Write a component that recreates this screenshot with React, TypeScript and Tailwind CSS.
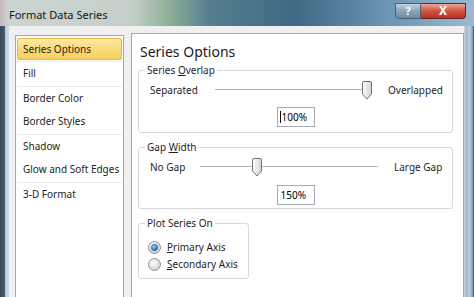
import type { ReactNode } from 'react'

const font = { fontFamily: '"Noto Sans", "Open Sans", Arial, sans-serif' }

function Thumb() {
  return (
    <svg width="10" height="19" viewBox="0 0 10 19">
      <defs>
        <linearGradient id="thumb" x1="0" y1="0" x2="1" y2="0">
          <stop offset="0" stopColor="#ffffff" />
          <stop offset="1" stopColor="#cfd2d6" />
        </linearGradient>
      </defs>
      <path
        d="M2 0.5 H8 Q9.5 0.5 9.5 2 V13 L5 18 L0.5 13 V2 Q0.5 0.5 2 0.5 Z"
        fill="url(#thumb)"
        stroke="#6e7378"
      />
    </svg>
  )
}

function Radio({ checked }: { checked?: boolean }) {
  return (
    <svg width="13" height="13" viewBox="0 0 13 13">
      <defs>
        <radialGradient id="rbg" cx="0.4" cy="0.35" r="0.7">
          <stop offset="0" stopColor="#ffffff" />
          <stop offset="1" stopColor="#c9cbcd" />
        </radialGradient>
        <radialGradient id="rdot" cx="0.4" cy="0.35" r="0.7">
          <stop offset="0" stopColor="#8fd0ff" />
          <stop offset="1" stopColor="#1a5fa8" />
        </radialGradient>
      </defs>
      <circle cx="6.5" cy="6.5" r="6" fill="url(#rbg)" stroke="#8f9498" />
      {checked && <circle cx="6.5" cy="6.5" r="3.2" fill="url(#rdot)" stroke="#2a5a8a" strokeWidth="0.6" />}
    </svg>
  )
}

function Slider({ width, pos }: { width: number; pos: number }) {
  return (
    <div className="relative flex h-[20px] items-center" style={{ width }}>
      <div className="h-[2px] w-full border-t border-b border-t-[#b4b7ba] border-b-white" />
      <div className="absolute top-[1px]" style={{ left: pos }}>
        <Thumb />
      </div>
    </div>
  )
}

function Group({ label, className, children }: { label: ReactNode; className?: string; children: ReactNode }) {
  return (
    <fieldset className={`rounded-[3px] border border-[#d5d9dd] ${className ?? ''}`}>
      <legend className="ml-[6px] px-[2px] text-[10px] leading-[14px] text-[#1e1e1e]">{label}</legend>
      {children}
    </fieldset>
  )
}

function Field({ value, caret }: { value: string; caret?: boolean }) {
  return (
    <div className="mx-auto flex h-[20px] w-[38px] items-center border border-[#a5acb5] bg-white pl-[2px] text-[10px] text-black">
      {caret && <span className="mr-[1px] h-[12px] w-px bg-black" />}
      <span className={caret ? '' : 'pl-[1px]'}>{value}</span>
    </div>
  )
}

const groups = [
  ['Series Options'],
  ['Fill'],
  ['Border Color', 'Border Styles'],
  ['Shadow', 'Glow and Soft Edges'],
  ['3-D Format'],
]

export default function App() {
  return (
    <div className="flex h-[297px] w-[474px] flex-col overflow-hidden bg-[#4a5868]" style={font}>
      {/* title bar */}
      <div className="flex h-[26px] shrink-0 bg-[linear-gradient(90deg,#c9b8bb_0%,#cdd5d3_2%,#c5cfc9_28%,#93b39a_35%,#55808f_44%,#3f6884_62%,#6790b0_80%,#9bbad3_100%)]">
        <div className="pl-[9px] pt-[6px] text-[11px] leading-[18px] text-[#141414]">Format Data Series</div>
        <div className="ml-auto mr-[8px] mt-[3px] flex h-[16px]">
          <div className="flex w-[26px] items-center justify-center rounded-bl-[4px] border border-[#4d5e70] bg-[linear-gradient(180deg,#c3d2df,#8aa3b8_50%,#6f8aa2)] text-[11px] font-bold text-white">
            ?
          </div>
          <div className="flex w-[45px] items-center justify-center rounded-br-[4px] border border-l-0 border-[#6b2520] bg-[linear-gradient(180deg,#e9a89c,#d2533f_50%,#b8321f)] text-[12px] font-bold text-white">
            X
          </div>
        </div>
      </div>

      <div className="flex flex-1">
        {/* left frame */}
        <div className="w-[9px] shrink-0 bg-[linear-gradient(90deg,#3b4858_0%,#4a5a6c_50%,#a9c7e6_58%,#c4dbf1_88%,#d6d6d6_100%)]" />

        {/* client area */}
        <div className="flex flex-1 items-start gap-[7px] bg-[#f0f0f0] pl-[6px]">
          <div className="mt-[9px] h-[300px] w-[109px] shrink-0 border border-[#a3a7ab] bg-white px-[1px] pt-[2px] text-[10px] text-[#1e1e1e]">
            {groups.map((g, gi) => (
              <div key={gi} className={gi > 0 ? 'mt-[1px] border-t border-[#ebebeb]' : ''}>
                {g.map((item) =>
                  item === 'Series Options' ? (
                    <div
                      key={item}
                      className="flex h-[22px] items-center rounded-[2px] border border-[#e3b64f] bg-[linear-gradient(180deg,#fdeaa4,#f9d872_60%,#f7cf60)] pl-[5px]"
                    >
                      {item}
                    </div>
                  ) : (
                    <div key={item} className="flex h-[23px] items-center pl-[6px]">
                      {item}
                    </div>
                  ),
                )}
              </div>
            ))}
          </div>

          <div className="mt-[7px] h-[300px] flex-1 border border-[#a3a7ab] bg-white pl-[6px] pr-[10px] pt-[8px]">
            <div className="ml-[2px] text-[14px] leading-[20px] text-[#1a1a1a]">Series Options</div>

            <Group
              className="mt-[1px] pb-[5px]"
              label={
                <>
                  Series <span className="underline">O</span>verlap
                </>
              }
            >
              <div className="flex items-center pl-[11px] pt-[3px] text-[10px] text-[#1e1e1e]">
                <span className="w-[65px]">Separated</span>
                <Slider width={157} pos={147} />
                <span className="ml-[16px]">Overlapped</span>
              </div>
              <div className="mt-[7px]">
                <Field value="100%" caret />
              </div>
            </Group>

            <Group
              className="mt-[7px] pb-[3px]"
              label={
                <>
                  Gap <span className="underline">W</span>idth
                </>
              }
            >
              <div className="flex items-center pl-[11px] pt-[3px] text-[10px] text-[#1e1e1e]">
                <span className="w-[50px]">No Gap</span>
                <Slider width={178} pos={52} />
                <span className="ml-[16px]">Large Gap</span>
              </div>
              <div className="mt-[8px]">
                <Field value="150%" />
              </div>
            </Group>

            <Group className="mt-[7px] w-[111px] pb-[5px]" label="Plot Series On">
              <div className="pl-[9px] pt-[9px] text-[10px] text-[#1e1e1e]">
                <div className="flex h-[17px] items-center gap-[6px]">
                  <Radio checked />
                  <span>
                    <span className="underline">P</span>rimary Axis
                  </span>
                </div>
                <div className="flex h-[17px] items-center gap-[6px]">
                  <Radio />
                  <span>
                    <span className="underline">S</span>econdary Axis
                  </span>
                </div>
              </div>
            </Group>
          </div>
        </div>

        {/* right frame */}
        <div className="w-[10px] shrink-0 bg-[linear-gradient(90deg,#d0d0d0_0%,#9fbcd6_25%,#b6cfe6_60%,#7f9ab4_85%,#3d4a5a_100%)]" />
      </div>
    </div>
  )
}
